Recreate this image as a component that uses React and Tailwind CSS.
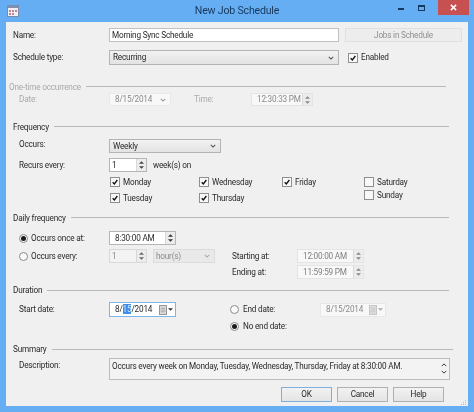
const Check = () => (
  <svg viewBox="0 0 12 12" className="w-[8px] h-[8px]"><path d="M2.5 6.5 L5 9 L9.5 3" fill="none" stroke="#111" strokeWidth="2" /></svg>
);
const Cb = ({ on }) => (
  <span className="w-[10px] h-[10px] shrink-0 border border-[#8f8f8f] bg-[#f8f8f8] flex items-center justify-center">{on && <Check />}</span>
);
const CheckLabel = ({ on, children, className = "" }) => (
  <div className={`flex items-center h-[14px] ${className}`}><Cb on={on} /><span className="ml-[3px]">{children}</span></div>
);
const Radio = ({ on }) => (
  <span className="w-[9px] h-[9px] shrink-0 rounded-full border border-[#8a8a8a] bg-[#fafafa] flex items-center justify-center">{on && <span className="w-[5px] h-[5px] rounded-full bg-[#1a1a1a]" />}</span>
);
const Chevron = ({ c = "#555", className = "" }) => (
  <svg viewBox="0 0 8 5" className={`w-[6px] h-[4px] ${className}`}><path d="M1 1 L4 4 L7 1" fill="none" stroke={c} strokeWidth="1.4" /></svg>
);
const Spin = ({ c = "#444" }) => (
  <span className="w-[10px] self-stretch ml-auto bg-[#ececec] border-l border-[#d8d8d8] flex flex-col items-center justify-center gap-[2px]">
    <svg viewBox="0 0 6 3" className="w-[5px] h-[3px]"><path d="M3 0 L6 3 H0 Z" fill={c} /></svg>
    <svg viewBox="0 0 6 3" className="w-[5px] h-[3px]"><path d="M3 3 L6 0 H0 Z" fill={c} /></svg>
  </span>
);
const Cal = ({ c = "#8b8b8b" }) => (
  <svg viewBox="0 0 9 11" className="w-[8px] h-[10px]"><rect x="0.5" y="0.5" width="8" height="10" fill="#dcdcdc" stroke={c} /><path d="M2 3.5H7M2 5.5H7M2 7.5H7" stroke={c} strokeWidth="0.7" /></svg>
);
const Combo = ({ children, className = "" }) => (
  <div className={`flex items-center pl-[3px] pr-[4px] border border-[#b4b4b4] bg-gradient-to-b from-[#f2f2f2] to-[#e3e3e3] ${className}`}>
    <span>{children}</span><Chevron className="ml-auto" />
  </div>
);
const Field = ({ children, dim, spin, className = "" }) => (
  <div className={`flex items-center border ${dim ? "border-[#e4e4e4] bg-[#f8f8f8] text-[#7e7e7e]" : "border-[#b5b5b5] bg-white"} ${className}`}>
    <span className="pl-[5px]">{children}</span>{spin && <Spin c={dim ? "#888" : "#333"} />}
  </div>
);
const Section = ({ title, dim, line = "", end = "mr-[25px]", className = "" }) => (
  <div className={`flex items-center h-[12px] ${className}`}>
    <span className={dim ? "text-[#a9a9a9]" : ""}>{title}</span>
    <span className={`flex-1 h-[1px] ml-[5px] bg-[#b9b9b9] ${line} ${end}`} />
  </div>
);
const Btn = ({ children, focus }) => (
  <div className={`w-[51px] h-[15px] flex items-center justify-center border bg-gradient-to-b from-[#f2f2f2] to-[#e4e4e4] ${focus ? "border-[#7fb0dc]" : "border-[#b0b0b0]"}`}>{children}</div>
);

export default function App() {
  return (
    <div className="w-[474px] h-[412px] bg-[#66aef3] flex flex-col overflow-hidden text-[#2a2a2a] text-[8.2px] leading-none tracking-[-0.2px] whitespace-nowrap blur-[0.45px]" style={{ fontFamily: 'Roboto, sans-serif' }}>
      <header className="h-[22px] shrink-0 relative flex items-center justify-center text-[#17385c] text-[10.6px]">
        <svg viewBox="0 0 12 12" className="absolute left-[7px] top-[5px] w-[12px] h-[12px]">
          <rect x="0.5" y="0.5" width="11" height="11" fill="#eef0f6" stroke="#7b8aa8" />
          <rect x="0.5" y="0.5" width="11" height="2.5" fill="#7f8fb3" />
          <path d="M2 5H4V7H2ZM5 5H7V7H5ZM8 5H10V7H8ZM2 8H4V10H2ZM5 8H7V10H5Z" fill="#c9848a" />
        </svg>
        <span>New Job Schedule</span>
        <div className="absolute right-[5px] top-0 flex items-start">
          <span className="w-[26px] h-[15px] flex items-center justify-center"><span className="w-[6px] h-[2px] bg-[#16395f] mt-[3px]" /></span>
          <span className="w-[24px] h-[15px] flex items-center justify-center -ml-[5px] mr-[5px]"><span className="w-[7px] h-[6px] border border-t-2 border-[#16395f]" /></span>
          <span className="w-[31px] h-[15px] bg-[#c75050] flex items-center justify-center">
            <svg viewBox="0 0 8 8" className="w-[7px] h-[7px]"><path d="M1 1L7 7M7 1L1 7" stroke="#fff" strokeWidth="1.7" /></svg>
          </span>
        </div>
      </header>

      <main className="mx-[6px] mb-[6px] flex-1 bg-[#f0f0f0] pl-[7px] flex flex-col relative">
        <div className="mt-[6px] flex items-center h-[14px]">
          <span className="w-[96px]">Name:</span>
          <div className="w-[230px] h-[14px] border border-[#c0c0c0] bg-white flex items-center pl-[2px]">Morning Sync Schedule</div>
          <div className="ml-[6px] w-[117px] h-[14px] border border-[#e0e0e0] bg-[#ededed] text-[#8f8f8f] flex items-center justify-center">Jobs in Schedule</div>
        </div>
        <div className="mt-[8px] flex items-center h-[15px]">
          <span className="w-[96px]">Schedule type:</span>
          <Combo className="w-[230px] h-[15px]">Recurring</Combo>
          <CheckLabel on className="ml-[9px]">Enabled</CheckLabel>
        </div>

        <Section dim title="One-time occurrence" line="mb-[2px]" className="mt-[16px] -ml-[4px]" end="mr-[22px]" />
        <div className="flex items-center h-[13px] text-[#a9a9a9] pl-[6px]">
          <span className="w-[90px]">Date:</span>
          <div className="w-[62px] h-[13px] bg-[#f8f8f8] border border-[#eaeaea] flex items-center pl-[5px] pr-[4px] text-[#8a8a8a]"><span>8/15/2014</span><Chevron c="#999" className="ml-auto" /></div>
          <span className="ml-[23px] w-[57px]">Time:</span>
          <Field dim spin className="w-[62px] h-[13px] text-[#8a8a8a]">12:30:33 PM</Field>
        </div>

        <Section title="Frequency" line="mb-[2px]" className="mt-[15px]" end="mr-[19px]" />
        <div className="mt-[6px] flex items-center h-[14px] pl-[6px]">
          <span className="w-[90px] pb-[3px]">Occurs:</span>
          <Combo className="w-[112px] h-[14px]">Weekly</Combo>
        </div>
        <div className="mt-[5px] flex items-center h-[14px] pl-[6px]">
          <span className="w-[90px]">Recurs every:</span>
          <div className="w-[38px] h-[14px] border border-[#b5b5b5] bg-white flex items-center"><span className="pl-[2px]">1</span><Spin /></div>
          <span className="ml-[6px]">week(s) on</span>
        </div>

        <div className="mt-[3px] flex pl-[97px]">
          <div className="w-[89px] flex flex-col gap-[2px]"><CheckLabel on>Monday</CheckLabel><CheckLabel on>Tuesday</CheckLabel></div>
          <div className="w-[83px] flex flex-col gap-[2px]"><CheckLabel on>Wednesday</CheckLabel><CheckLabel on>Thursday</CheckLabel></div>
          <div className="w-[82px]"><CheckLabel on>Friday</CheckLabel></div>
          <div className="flex flex-col"><CheckLabel>Saturday</CheckLabel><CheckLabel className="-mt-[1px]">Sunday</CheckLabel></div>
        </div>

        <Section title="Daily frequency" line="mb-[2px]" className="mt-[7px]" end="mr-[19px]" />
        <div className="mt-[7px] flex items-center h-[14px] pl-[6px]">
          <Radio on /><span className="ml-[3px] w-[78px]">Occurs once at:</span>
          <Field spin className="w-[67px] h-[14px]">8:30:00 AM</Field>
        </div>
        <div className="mt-[4px] flex items-center h-[14px] pl-[6px]">
          <Radio /><span className="ml-[3px] w-[78px]">Occurs every:</span>
          <div className="w-[38px] h-[14px] border border-[#d8d8d8] bg-[#f3f3f3] text-[#8a8a8a] flex items-center"><span className="pl-[2px]">1</span><Spin c="#666" /></div>
          <div className="ml-[6px] w-[62px] h-[14px] border border-[#dcdcdc] bg-[#e9e9e9] text-[#8a8a8a] flex items-center pl-[2px] pr-[4px]"><span>hour(s)</span><Chevron c="#aaa" className="ml-auto" /></div>
          <span className="ml-[17px] w-[65px]">Starting at:</span>
          <Field dim spin className="w-[67px] h-[14px]">12:00:00 AM</Field>
        </div>
        <div className="mt-[2px] flex items-center h-[14px] pl-[219px]">
          <span className="w-[65px]">Ending at:</span>
          <Field dim spin className="w-[67px] h-[14px]">11:59:59 PM</Field>
        </div>

        <Section title="Duration" className="mt-[5px]" end="mr-[19px]" />
        <div className="mt-[6px] flex h-[31px] pl-[6px]">
          <span className="w-[90px] h-[15px] flex items-center">Start date:</span>
          <div className="w-[67px] h-[15px] border border-[#7fb4e6] bg-white flex items-center pl-[5px] pr-[2px]">
            <span>8/<span className="bg-[#3d8fe8] text-[#cfe3f8]">15</span>/2014</span>
            <span className="ml-auto flex items-center gap-[1px]"><Cal /><svg viewBox="0 0 6 3" className="w-[5px] h-[3px]"><path d="M0 0H6L3 3Z" fill="#333" /></svg></span>
          </div>
          <div className="ml-[54px] flex flex-col">
            <div className="flex items-center h-[15px]">
              <Radio /><span className="ml-[4px] w-[77px]">End date:</span>
              <div className="w-[66px] h-[14px] bg-[#f8f8f8] border border-[#e8e8e8] text-[#8a8a8a] flex items-center pl-[5px] pr-[2px]">
                <span>8/15/2014</span>
                <span className="ml-auto flex items-center gap-[1px]"><Cal c="#c4c4c4" /><svg viewBox="0 0 6 3" className="w-[5px] h-[3px]"><path d="M0 0H6L3 3Z" fill="#aaa" /></svg></span>
              </div>
            </div>
            <div className="flex items-center h-[14px] mt-[2px]"><Radio on /><span className="ml-[4px]">No end date:</span></div>
          </div>
        </div>

        <Section title="Summary" className="mt-[10px]" end="mr-[15px]" />
        <div className="mt-[3px] flex h-[22px] pl-[6px]">
          <span className="w-[90px] h-[15px] flex items-center">Description:</span>
          <div className="w-[341px] h-[22px] border border-[#bdbdbd] bg-[#f3f3f3] flex pl-[2px] pt-[3px] relative">
            <span>Occurs every week on Monday, Tuesday, Wednesday, Thursday, Friday at 8:30:00 AM.</span>
            <span className="absolute right-[2px] top-[4px] flex flex-col gap-[3px]">
              <svg viewBox="0 0 8 5" className="w-[6px] h-[4px]"><path d="M1 4 L4 1 L7 4" fill="none" stroke="#333" strokeWidth="1.3" /></svg>
              <svg viewBox="0 0 8 5" className="w-[6px] h-[4px]"><path d="M1 1 L4 4 L7 1" fill="none" stroke="#333" strokeWidth="1.3" /></svg>
            </span>
          </div>
        </div>
        <div className="mt-[7px] flex gap-[5px] pl-[268px]">
          <Btn focus>OK</Btn><Btn>Cancel</Btn><Btn>Help</Btn>
        </div>
        <svg viewBox="0 0 6 6" className="absolute right-[1px] bottom-[1px] w-[6px] h-[6px]"><path d="M4 1H5V2H4ZM2 3H3V4H2ZM4 3H5V4H4ZM0 5H1V6H0ZM2 5H3V6H2ZM4 5H5V6H4Z" fill="#bdbdbd" /></svg>
      </main>
    </div>
  );
}
